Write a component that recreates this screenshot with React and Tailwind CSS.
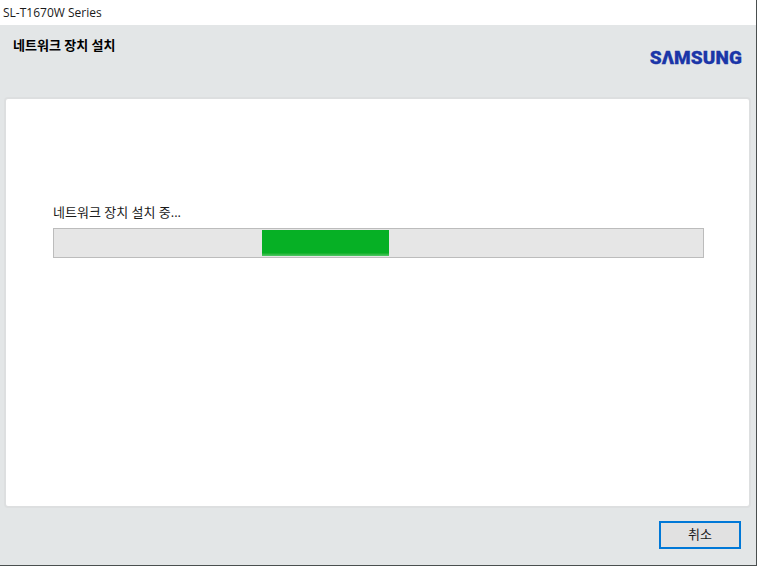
const font = { fontFamily: '"Open Sans", "Noto Sans CJK KR", sans-serif' };

function App() {
  return (
    <div
      className="flex h-[566px] w-[757px] flex-col overflow-hidden border-r border-b border-[#4a4f4f] bg-[#e3e6e7] text-black"
      style={font}
    >
      <div className="flex h-[25px] items-center bg-white pl-[3px] text-[12px] text-[#1a1a1a]">SL-T1670W Series</div>

      <div className="flex h-[72px] items-start justify-between pt-[12px] pr-[14px] pl-[13px]">
        <div className="text-[13px] leading-[17px] font-bold">네트워크 장치 설치</div>
        <div className="mt-[11px] font-['Roboto'] text-[19px] leading-[20px] font-black tracking-[0.1px] text-[#1b36a8] [-webkit-text-stroke:0.3px_#1b36a8]">
          SΛMSUNG
        </div>
      </div>

      <div className="mr-[5px] ml-[4px] flex h-[411px] flex-col rounded-[4px] border-2 border-[#dddfe0] bg-white pt-[104px] pr-[45px] pl-[47px]">
        <div className="text-[13px] leading-[18px] text-[#1a1a1a]">네트워크 장치 설치 중...</div>
        <div className="mt-[7px] flex h-[30px] items-stretch border border-[#bcbcbc] bg-[#e6e6e6] py-px pl-[208px]">
          <div className="flex w-[127px] flex-col bg-[#06b025]">
            <div className="mt-auto h-[3px] bg-gradient-to-b from-[#06b025] to-[#4cc863]"></div>
          </div>
        </div>
      </div>

      <div className="flex flex-1 justify-end pt-[13px] pr-[15px]">
        <button className="h-[28px] w-[82px] border-2 border-[#0078d7] bg-[#e1e1e1] text-[13px] text-[#1a1a1a]">
          취소
        </button>
      </div>
    </div>
  );
}

export default App;
